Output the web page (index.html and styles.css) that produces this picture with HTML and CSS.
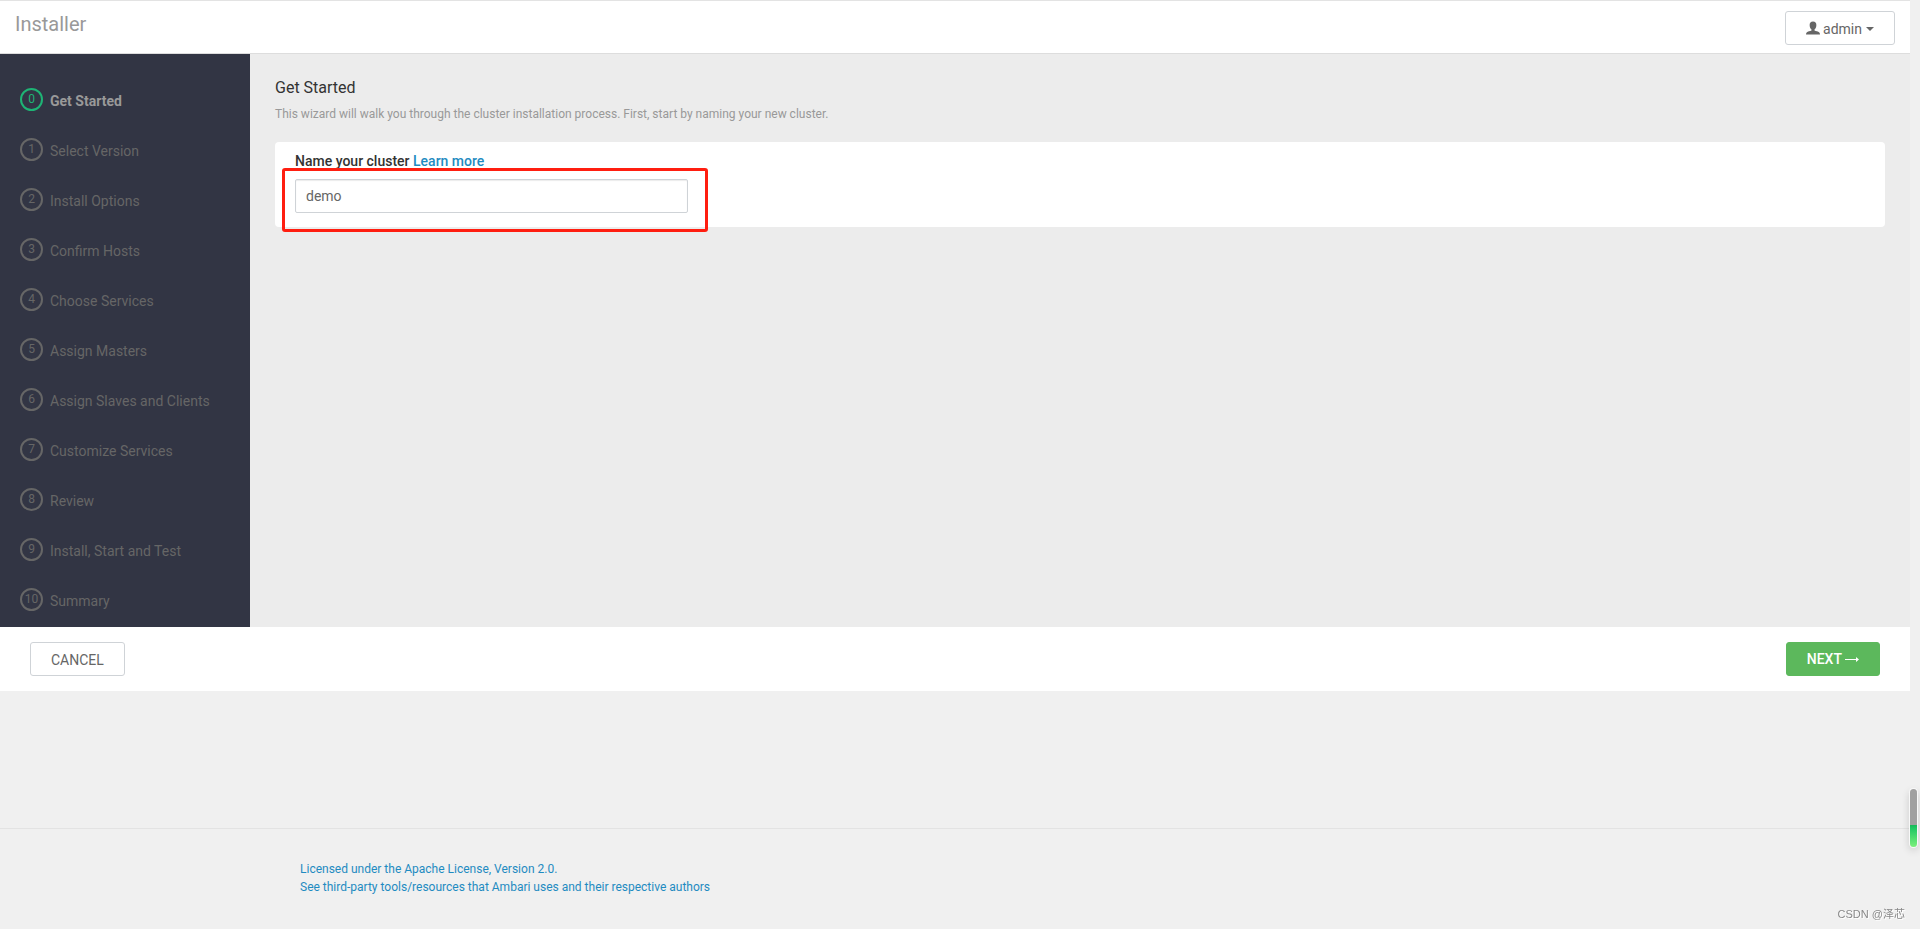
FILE: index.html
```html
<!DOCTYPE html>
<html lang="en">

<head>
    <meta charset="UTF-8">
    <meta name="viewport" content="width=device-width, initial-scale=1.0">
    <title>Ambari - Cluster Install Wizard</title>
    <link rel="stylesheet" href="styles.css">
</head>

<body>
    <div class="page">
        <header class="top-nav">
            <h1 class="brand">Installer</h1>
            <button class="btn user-menu" type="button">
                <svg class="user-icon" width="14" height="14" viewBox="0 0 15 14" aria-hidden="true">
                    <path d="M7.500 0C5 0 3.900 1.500 3.900 3.700c0 2.100.8 3.900 2 4.900v1C4.500 10.300 1.900 10.700.7 11.700.2 12.200 0 13 0 14h15c0-1-.2-1.800-.7-2.300-1.200-1-3.800-1.400-5.200-2.100v-1c1.200-1 2-2.800 2-4.900C11.100 1.500 10 0 7.500 0z" />
                </svg>
                <span>admin</span>
                <span class="caret"></span>
            </button>
        </header>

        <main class="wizard">
            <nav class="sidebar">
                <ol class="steps">
                    <li class="step active"><span class="step-index">0</span><span class="step-name">Get Started</span></li>
                    <li class="step"><span class="step-index">1</span><span class="step-name">Select Version</span></li>
                    <li class="step"><span class="step-index">2</span><span class="step-name">Install Options</span></li>
                    <li class="step"><span class="step-index">3</span><span class="step-name">Confirm Hosts</span></li>
                    <li class="step"><span class="step-index">4</span><span class="step-name">Choose Services</span></li>
                    <li class="step"><span class="step-index">5</span><span class="step-name">Assign Masters</span></li>
                    <li class="step"><span class="step-index">6</span><span class="step-name">Assign Slaves and Clients</span></li>
                    <li class="step"><span class="step-index">7</span><span class="step-name">Customize Services</span></li>
                    <li class="step"><span class="step-index">8</span><span class="step-name">Review</span></li>
                    <li class="step"><span class="step-index">9</span><span class="step-name">Install, Start and Test</span></li>
                    <li class="step"><span class="step-index">10</span><span class="step-name">Summary</span></li>
                </ol>
            </nav>

            <section class="content">
                <h2 class="title">Get Started</h2>
                <p class="description">This wizard will walk you through the cluster installation process. First, start by naming your new cluster.</p>
                <form class="panel" id="clusterForm">
                    <div class="panel-label">
                        <label for="clusterName">Name your cluster</label>
                        <a href="#">Learn more</a>
                    </div>
                    <div class="field">
                        <input type="text" id="clusterName" name="clusterName" value="demo">
                        <span class="highlight"></span>
                    </div>
                </form>
            </section>
        </main>

        <div class="wizard-footer">
            <button class="btn" type="button">CANCEL</button>
            <button class="btn btn-success" type="submit" form="clusterForm">
                <span>NEXT</span>
                <svg width="14" height="7" viewBox="0 0 14 7" aria-hidden="true">
                    <path d="M0 3h11v-2l3 2.500-3 2.500v-2H0z" />
                </svg>
            </button>
        </div>

        <footer class="footer">
            <a href="#">Licensed under the Apache License, Version 2.0.</a>
            <a href="#">See third-party tools/resources that Ambari uses and their respective authors</a>
        </footer>
    </div>

    <div class="meter"></div>
    <div class="watermark">CSDN @泽芯</div>
</body>

</html>
```

FILE: styles.css
```css
* {
    margin: 0;
    padding: 0;
    box-sizing: border-box;
}

body {
    min-height: 100vh;
    background: #f0f0f0;
    color: #333;
    font-family: Roboto, "Liberation Sans", sans-serif;
    font-size: 14px;
    line-height: 20px;
}

a {
    color: #1f8bc1;
    text-decoration: none;
}

a:hover {
    text-decoration: underline;
}

.page {
    margin-right: 10px;
}

/* header */
.top-nav {
    display: flex;
    justify-content: space-between;
    align-items: flex-start;
    height: 54px;
    padding: 10px 15px 0;
    background: #fff;
    border-top: 1px solid #e3e3e3;
    border-bottom: 1px solid #ddd;
}

.brand {
    padding-top: 3px;
    color: #999;
    font-size: 20px;
    font-weight: 400;
}

.btn {
    display: flex;
    align-items: center;
    gap: 3px;
    height: 34px;
    padding: 2px 20px 0;
    background: #fff;
    border: 1px solid #cfd3d7;
    border-radius: 3px;
    color: #666;
    font: inherit;
    cursor: pointer;
}

.user-icon {
    margin-bottom: 2px;
    fill: #666;
}

.caret {
    margin-left: 1px;
    border-top: 4px solid #666;
    border-left: 4px solid transparent;
    border-right: 4px solid transparent;
}

/* wizard */
.wizard {
    display: flex;
}

.sidebar {
    flex: 0 0 250px;
    padding: 20px 0 3px;
    background: #323544;
}

.steps {
    list-style: none;
}

.step {
    display: flex;
    align-items: center;
    gap: 7px;
    height: 50px;
    padding-left: 20px;
    color: #666;
}

.step-index {
    width: 23px;
    height: 23px;
    border: 2px solid #666;
    border-radius: 50%;
    font-size: 12px;
    line-height: 19px;
    text-align: center;
}

.step-name {
    padding-top: 4px;
}

.step.active {
    color: #999;
    font-weight: 700;
}

.step.active .step-index {
    border-color: #1eb475;
    color: #1eb475;
    font-weight: 400;
}

.content {
    flex: 1;
    padding: 24px 25px;
    background: #ececec;
}

.title {
    font-size: 16px;
    font-weight: 400;
}

.description {
    padding: 6px 0 18px;
    color: #999;
    font-size: 12px;
}

.panel {
    height: 85px;
    padding: 9px 20px;
    background: #fff;
    border-radius: 4px;
}

.panel-label {
    margin-bottom: 8px;
    font-weight: 500;
}

.field {
    position: relative;
    width: 393px;
}

.field input {
    display: block;
    width: 100%;
    height: 34px;
    padding: 0 10px;
    border: 1px solid #cfd3d7;
    border-radius: 2px;
    box-shadow: inset 0 1px 1px rgba(0, 0, 0, 0.08);
    color: #666;
    font: inherit;
    outline: none;
}

/* frame around the field */
.highlight {
    position: absolute;
    inset: -11px -20px -19px -13px;
    border: 3px solid #ff1e10;
    border-radius: 3px;
    pointer-events: none;
}

.wizard-footer {
    display: flex;
    justify-content: space-between;
    padding: 15px 30px;
    background: #fff;
}

.btn-success {
    padding-top: 0;
    background: #5cb85c;
    border-color: #5cb85c;
    color: #fff;
    font-weight: 500;
}

.btn-success svg {
    fill: #fff;
}

/* footer */
.footer {
    display: flex;
    flex-direction: column;
    align-items: flex-start;
    margin-top: 137px;
    padding: 31px 300px 0;
    border-top: 1px solid #e3e3e3;
    font-size: 12px;
    line-height: 18px;
}

.meter {
    position: fixed;
    right: 3px;
    bottom: 82px;
    width: 7px;
    height: 58px;
    background: linear-gradient(#a0a0a0 36px, #16b857 36px, #1fc763 39px, #7cf07c);
    border-radius: 4px;
    box-shadow: 0 0 0 1px #f8f8f8, 0 3px 8px rgba(0, 0, 0, 0.2);
}

.watermark {
    position: fixed;
    right: 15px;
    bottom: 5px;
    color: #888;
    font-family: "Liberation Sans", "Noto Sans CJK SC", sans-serif;
    font-size: 11px;
    text-shadow: 1px 1px 0 #fff;
}
```
